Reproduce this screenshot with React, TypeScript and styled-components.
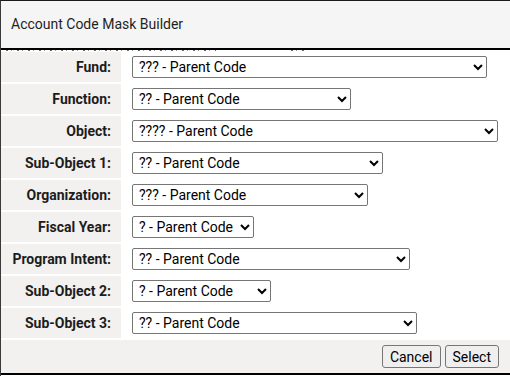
import React from "react";
import styled, { createGlobalStyle } from "styled-components";

const Global = createGlobalStyle`
  html, body { margin: 0; padding: 0; background: #ffffff; }
  body { font-family: Roboto, "Liberation Sans", Arial, sans-serif; }
  * { box-sizing: border-box; }
`;

const Dialog = styled.div`
  width: 510px;
  height: 376px;
  border-top: 1px solid #1a1a1a;
  border-left: 1px solid #3a3a3a;
  display: flex;
  flex-direction: column;
  overflow: hidden;
  background: #ffffff;
`;

const Header = styled.div`
  height: 49px;
  flex: none;
  background: #f5f5f5;
  border-bottom: 2px solid #000000;
  display: flex;
  align-items: center;
  padding-left: 10px;
  padding-bottom: 2px;
  font-size: 14px;
  color: #1f1f1f;
`;

const Remnant = styled.div`
  height: 2px;
  flex: none;
  display: flex;
  gap: 75px;
  padding-left: 5px;
`;

const RemnantDash = styled.div<{ $w: number }>`
  width: ${(p) => p.$w}px;
  height: 1px;
  background: repeating-linear-gradient(
    90deg,
    #666 0 2px,
    transparent 2px 5px,
    #9a9a9a 5px 6px,
    transparent 6px 11px
  );
`;

const Grid = styled.div`
  display: grid;
  grid-template-columns: 120px 1fr;
  grid-auto-rows: 30px;
  row-gap: 2px;
  padding-bottom: 2px;
  flex: none;
`;

const Label = styled.div`
  background: #f2f1ef;
  display: flex;
  align-items: center;
  justify-content: flex-end;
  padding-right: 10px;
  font-weight: 700;
  font-size: 14px;
  color: #1c1c1c;
  white-space: nowrap;
`;

const Cell = styled.div`
  display: flex;
  align-items: center;
  padding-left: 11px;
`;

const Select = styled.select<{ $w: number }>`
  width: ${(p) => p.$w}px;
  height: 22px;
  font-family: Roboto, "Liberation Sans", Arial, sans-serif;
  font-size: 14px;
  color: #000;
  background: #fff;
  border: 1px solid #767676;
  border-radius: 2px;
  padding: 0 0 0 2px;
`;

const Footer = styled.div`
  flex: 1;
  background: #f2f1ef;
  border-bottom: 2px solid #000;
  margin-bottom: 1px;
  display: flex;
  justify-content: flex-end;
  align-items: flex-start;
  gap: 4px;
  padding: 5px 11px 0 0;
`;

const Button = styled.button`
  height: 23px;
  font-family: Roboto, "Liberation Sans", Arial, sans-serif;
  font-size: 14px;
  color: #000;
  background: #efefef;
  border: 1px solid #767676;
  border-radius: 3px;
  padding: 0 7px;
`;

const rows: { label: string; value: string; w: number }[] = [
  { label: "Fund:", value: "??? - Parent Code", w: 355 },
  { label: "Function:", value: "?? - Parent Code", w: 219 },
  { label: "Object:", value: "???? - Parent Code", w: 366 },
  { label: "Sub-Object 1:", value: "?? - Parent Code", w: 251 },
  { label: "Organization:", value: "??? - Parent Code", w: 236 },
  { label: "Fiscal Year:", value: "? - Parent Code", w: 122 },
  { label: "Program Intent:", value: "?? - Parent Code", w: 278 },
  { label: "Sub-Object 2:", value: "? - Parent Code", w: 139 },
  { label: "Sub-Object 3:", value: "?? - Parent Code", w: 285 },
];

export default function App() {
  return (
    <>
      <Global />
      <Dialog>
        <Header>Account Code Mask Builder</Header>
        <Remnant>
          <RemnantDash $w={210} />
          <RemnantDash $w={15} />
        </Remnant>
        <Grid>
          {rows.map((r) => (
            <React.Fragment key={r.label}>
              <Label>{r.label}</Label>
              <Cell>
                <Select $w={r.w} defaultValue={r.value}>
                  <option>{r.value}</option>
                </Select>
              </Cell>
            </React.Fragment>
          ))}
        </Grid>
        <Footer>
          <Button>Cancel</Button>
          <Button>Select</Button>
        </Footer>
      </Dialog>
    </>
  );
}
